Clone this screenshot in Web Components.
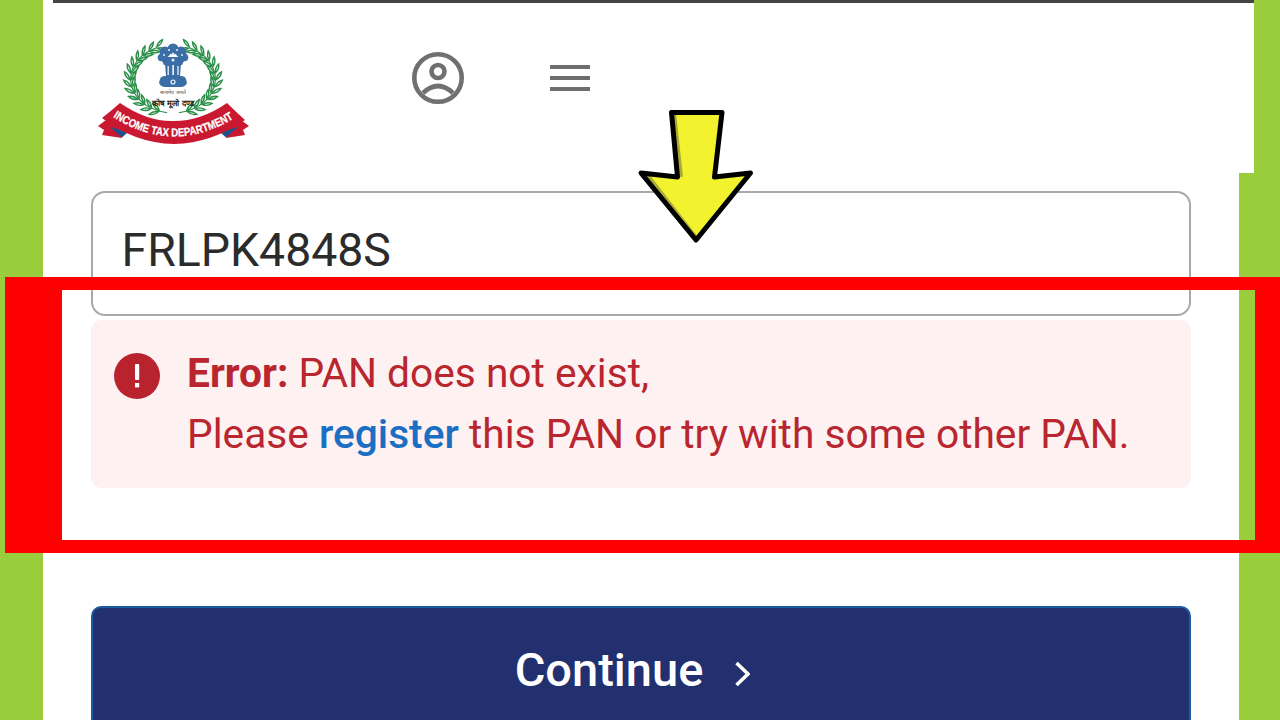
<!DOCTYPE html>
<html lang="en">
<head>
<meta charset="utf-8">
<title>PAN does not exist</title>
<style>
html,body{margin:0;padding:0;background:#9acd3c}
body{font-family:Roboto,"Liberation Sans",sans-serif}
a{color:#1a6fc4;font-weight:500;text-decoration:none}
b{font-weight:700}
</style>
</head>
<body>
<app-stage>
  <site-header></site-header>
  <main-panel>
    <pan-field>FRLPK4848S</pan-field>
    <error-alert><b>Error:</b> PAN does not exist,<br>Please <a href="#">register</a> this PAN or try with some other PAN.</error-alert>
    <continue-button>Continue</continue-button>
  </main-panel>
  <red-frame></red-frame>
  <yellow-arrow></yellow-arrow>
</app-stage>
<script>
function def(name, html){
  customElements.define(name, class extends HTMLElement{
    constructor(){super();this.attachShadow({mode:'open'}).innerHTML=html;}
  });
}
function leaves(){
  const cx=173,cy=79,rx=42.500,ry=34;let out='',stem='';
  for(const side of [-1,1]){
    let d='';
    for(let i=0;i<=13;i++){
      const t=(i/13)*150+8;
      const a=t*Math.PI/180;
      const x=cx+side*rx*Math.sin(a), y=cy+ry*Math.cos(a);
      d+=(i?'L':'M')+x.toFixed(1)+' '+y.toFixed(1);
      if(i<1)continue;
      const tx=side*Math.cos(a)*rx, ty=-Math.sin(a)*ry, l=Math.hypot(tx,ty);
      const ux=tx/l, uy=ty/l, nx=side*Math.sin(a), ny=Math.cos(a);
      for(const o of [1,-1]){
        const bx=x+o*nx*.8, by=y+o*ny*.8;
        const ex=bx+ux*8+o*nx*5, ey=by+uy*8+o*ny*5;
        const mx=(bx+ex)/2, my=(by+ey)/2, px=-(ey-by)*.26, py=(ex-bx)*.26;
        out+=`<path d="M${bx.toFixed(1)} ${by.toFixed(1)}Q${(mx+px).toFixed(1)} ${(my+py).toFixed(1)} ${ex.toFixed(1)} ${ey.toFixed(1)}Q${(mx-px).toFixed(1)} ${(my-py).toFixed(1)} ${bx.toFixed(1)} ${by.toFixed(1)}Z"/>`;
      }
    }
    stem+=`<path d="${d}"/>`;
  }
  return `<g fill="#e9f6ea" stroke="#2a8f48" stroke-width="1.400">${out}</g><g fill="none" stroke="#2a8f48" stroke-width="1.100">${stem}</g>`;
}
def('app-stage',`<style>
:host{display:flex;flex-direction:column;align-items:flex-start;position:relative;width:1280px;height:720px;overflow:hidden;background:#9acd3c;padding-left:43px;box-sizing:border-box}
::slotted(*){flex:none}
</style><slot></slot>`);

def('brand-logo',`<style>
:host{display:block;width:156px;height:108px}
svg{display:block}
text{font-family:"Liberation Sans",Roboto,sans-serif}
</style>
<svg width="156" height="108" viewBox="96 38 156 108">
${leaves()}
<g fill="#3b6ea6">
  <circle cx="173" cy="49" r="5.500"/><circle cx="165" cy="52" r="5.500"/><circle cx="181" cy="52" r="5.500"/>
  <circle cx="161.500" cy="57.500" r="3.800"/><circle cx="184.500" cy="57.500" r="3.800"/>
  <path d="M160 57h26l-4 8h-18z"/>
  <path d="M165 64h16l-1 12h-14z"/>
  <path d="M160 79q1-3 5-3h16q4 0 5 3l1 4q-2 4-6 4h-16q-4 0-6-4z"/>
</g>
<g fill="#dfe9f3">
  <circle cx="169" cy="50" r="1.100"/><circle cx="177" cy="50" r="1.100"/><circle cx="173" cy="54" r="1.300"/><circle cx="164" cy="55" r="1"/><circle cx="182" cy="55" r="1"/><circle cx="173" cy="60" r="1.500"/>
  <path d="M172.200 65h1.800v10h-1.800zM167.500 66h1.400v9h-1.400zM177.300 66h1.400v9h-1.400z"/>
  <circle cx="173" cy="82" r="2.600"/>
</g>
<circle cx="173" cy="82" r="1.200" fill="#2c6098"/>
<text x="173" y="93.500" text-anchor="middle" font-size="5" fill="#444" font-family="'Noto Sans','Noto Sans CJK SC',sans-serif">सत्यमेव जयते</text>
<text x="173" y="106" text-anchor="middle" font-size="8" font-weight="700" fill="#222" font-family="'Noto Sans','Noto Sans CJK SC',sans-serif">कोष मूलो दण्ड</text>
<path d="M106 120L98 126L104 130L102 135L122 138L118 124Z" fill="#c9182f"/>
<path d="M241 120L249 126L243 130L245 135L226 138L230 124Z" fill="#c9182f"/>
<path d="M110 127L122 137.500L128 132Z" fill="#21508f"/>
<path d="M238 127L226 137.500L220 132Z" fill="#21508f"/>
<path d="M120 103Q148 122 174 121Q201 121 227 103Q236 112 245 120Q212 143 174 144Q134 143 102 118Q111 111 120 103Z" fill="#c9182f"/>
<path id="ribbon" d="M113 117Q174 156 236 117" fill="none"/>
<text font-size="11.500" font-weight="700" fill="#fff" stroke="#fff" stroke-width=".25" textLength="128" lengthAdjust="spacingAndGlyphs"><textPath href="#ribbon" startOffset="0">INCOME TAX DEPARTMENT</textPath></text>
</svg>`);

def('account-icon',`<style>:host{display:block;width:54px;height:54px}svg{display:block}</style>
<svg width="54" height="54" viewBox="0 0 54 54" fill="none" stroke="#707070" stroke-width="4.600">
<circle cx="27" cy="27" r="23.700"/>
<circle cx="27" cy="20.500" r="6.500"/>
<path d="M12 42Q27 28 42 42"/>
</svg>`);

def('menu-icon',`<style>:host{display:flex;flex-direction:column;gap:7px;width:40px}i{display:block;height:4px;background:#6e6e6e}</style><i></i><i></i><i></i>`);

def('site-header',`<style>
:host{display:block;width:1211px;height:173px;background:#fff}
.rule{height:3px;margin-left:10px;background:#444}
.row{display:flex;align-items:flex-start}
brand-logo{margin:35px 0 0 53px}
account-icon{margin:48px 0 0 159px}
menu-icon{margin:62px 0 0 85px}
</style>
<div class="rule"></div>
<div class="row"><brand-logo></brand-logo><account-icon></account-icon><menu-icon></menu-icon></div>`);

def('main-panel',`<style>
:host{display:flex;flex-direction:column;width:1196px;height:547px;box-sizing:border-box;padding:18px 48px 0;background:#fff}
::slotted(*){flex:none}
</style><slot></slot>`);

def('pan-field',`<style>
:host{display:flex;align-items:center;height:125px;box-sizing:border-box;padding:0 29px 8px 28.500px;border:2px solid #a9a9a9;border-radius:14px;background:#fff;font-size:46.400px;color:#2b2b2b}
</style><slot></slot>`);

def('error-alert',`<style>
:host{display:flex;align-items:flex-start;gap:27px;margin-top:4px;height:168px;box-sizing:border-box;padding:23px 23px 0;border-radius:10px;background:#fdf1f1;color:#b9262f;font-size:40.700px;line-height:61px}
svg{flex:none;margin-top:10px;display:block}
</style>
<svg width="46" height="46" viewBox="0 0 46 46"><circle cx="23" cy="23" r="23" fill="#b9232e"/><rect x="21" y="11" width="4.200" height="16" rx="1" fill="#fff"/><rect x="21" y="30" width="4.200" height="4.400" fill="#fff"/></svg>
<div><slot></slot></div>`);

def('continue-button',`<style>
:host{display:flex;justify-content:center;align-items:center;gap:31px;margin-top:118px;height:130px;box-sizing:border-box;padding:0 17px 6px 0;border:2px solid #1d5aa0;border-bottom:0;border-radius:10px 10px 0 0;background:#22306f;color:#fff;font-size:47px;font-weight:500}
svg{display:block;margin-top:10px}
</style><span><slot></slot></span>
<svg width="16" height="26" viewBox="0 0 16 26" fill="none" stroke="#fff" stroke-width="3.600"><path d="M2.500 2L14 13L2.500 24"/></svg>`);

def('red-frame',`<style>
:host{position:absolute;left:5px;top:277px;width:1275px;height:276px;box-sizing:border-box;border:solid #f00;border-width:13px 25px 13px 57px;pointer-events:none}
</style>`);

def('yellow-arrow',`<style>
:host{position:absolute;left:630px;top:100px;width:130px;height:150px}
svg{display:block}
</style>
<svg width="130" height="150" viewBox="630 100 130 150">
<path d="M671.500 112.500H722L714.500 177L750.500 173L696 240L641 173L677.500 177Z" fill="#f2f22e"/>
<path d="M671.500 112.500H676L683 177L649 174L698 237L696 240L641 173L677.500 177Z" fill="#a9a934"/>
<path d="M671.500 112.500H722L714.500 177L750.500 173L696 240L641 173L677.500 177Z" fill="none" stroke="#000" stroke-width="5" stroke-linejoin="round"/>
</svg>`);
</script>
</body>
</html>
